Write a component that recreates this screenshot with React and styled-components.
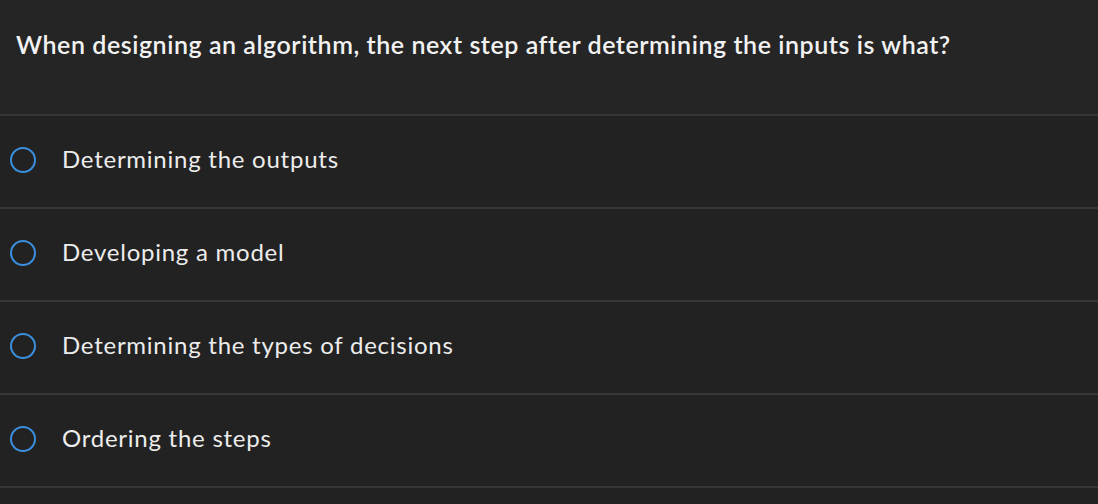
import React, { useState } from "react";
import styled, { createGlobalStyle } from "styled-components";

const GlobalStyle = createGlobalStyle`
  html, body {
    margin: 0;
    padding: 0;
    background: #222222;
  }
  body {
    font-family: Lato, "Open Sans", "Liberation Sans", sans-serif;
    -webkit-font-smoothing: antialiased;
  }
`;

const options = [
  "Determining the outputs",
  "Developing a model",
  "Determining the types of decisions",
  "Ordering the steps",
];

const App = () => {
  const [picked, setPicked] = useState(null);

  return (
    <Page>
      <GlobalStyle />
      <Question>
        When designing an algorithm, the next step after determining the inputs
        is what?
      </Question>
      <OptionList>
        {options.map((text, i) => (
          <Option key={text} onClick={() => setPicked(i)}>
            <Radio $checked={picked === i} />
            <OptionText>{text}</OptionText>
          </Option>
        ))}
      </OptionList>
    </Page>
  );
};

export default App;

const Page = styled.div`
  width: 1098px;
  height: 504px;
  background: #222222;
  overflow: hidden;
`;

const Question = styled.h2`
  margin: 0;
  height: 116px;
  box-sizing: border-box;
  padding: 27px 16px 0;
  background: #252525;
  border-bottom: 2px solid #363636;
  color: #f2f2f2;
  font-size: 25px;
  font-weight: 600;
  line-height: 34px;
  letter-spacing: 0.55px;
`;

const OptionList = styled.div`
  display: flex;
  flex-direction: column;
`;

const Option = styled.div`
  display: flex;
  align-items: center;
  height: 91px;
  box-sizing: content-box;
  border-bottom: 2px solid #363636;
  padding-left: 10px;
  cursor: pointer;
`;

const Radio = styled.span`
  width: 26px;
  height: 26px;
  box-sizing: border-box;
  border-radius: 50%;
  border: 2.5px solid #3a8fde;
  background: ${(p) => (p.$checked ? "#3a8fde" : "transparent")};
  flex-shrink: 0;
  margin: 0 26px 4px 0;
`;

const OptionText = styled.span`
  color: #ececec;
  font-size: 24px;
  font-weight: 400;
  letter-spacing: 0.75px;
  line-height: 30px;
  margin-bottom: 6px;
`;
